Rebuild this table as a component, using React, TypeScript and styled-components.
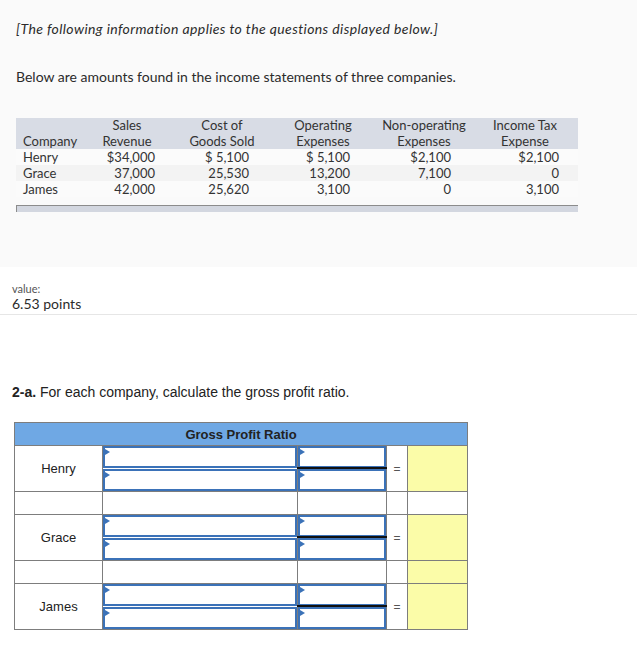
import React from "react";
import styled, { createGlobalStyle } from "styled-components";

const GlobalStyle = createGlobalStyle`
  html, body { margin: 0; padding: 0; background: #ffffff; }
  body { font-family: "Lato", "Open Sans", sans-serif; color: #333; }
`;

const Intro = styled.section`
  background: #fafafa;
  height: 267px;
  box-sizing: border-box;
  padding: 20px 0 0 16px;
`;

const Note = styled.p`
  margin: 0;
  font-style: italic;
  font-size: 14px;
  line-height: 18px;
  letter-spacing: 0.39px;
  color: #2b2b2b;
`;

const Lead = styled.p`
  margin: 30px 0 0 0;
  font-size: 14px;
  line-height: 18px;
  color: #2b2b2b;
`;

const DataGrid = styled.div`
  margin-top: 32px;
  width: 562px;
  display: grid;
  grid-template-columns: 72px 78px 112px 90px 112px 90px 8px;
  font-size: 13px;
  line-height: 16px;
  color: #333;
`;

const HeadCell = styled.div<{ $left?: boolean }>`
  background: #d8dce5;
  display: flex;
  flex-direction: column;
  justify-content: flex-end;
  text-align: ${(p) => (p.$left ? "left" : "center")};
  padding: ${(p) => (p.$left ? "0 0 0 7px" : "0")};
  height: 31px;
`;

const Cell = styled.div<{ $pr?: number; $left?: boolean; $shade?: boolean }>`
  background: ${(p) => (p.$shade ? "#f3f3f3" : "#fbfbfb")};
  text-align: ${(p) => (p.$left ? "left" : "right")};
  padding: ${(p) => (p.$left ? "0 0 0 7px" : `0 ${p.$pr ?? 0}px 0 0`)};
  height: 16px;
`;

const BottomBar = styled.div`
  margin-top: 8px;
  width: 561px;
  height: 6px;
  background: #d3d7e0;
  border-top: 1px solid #8c8c8c;
  border-left: 1px solid #8c8c8c;
`;

const ValueBlock = styled.section`
  box-sizing: border-box;
  padding: 15px 0 0 12px;
  height: 48px;
  border-bottom: 1px solid #e6e6e6;
`;

const ValueLabel = styled.div`
  font-size: 11px;
  line-height: 13px;
  color: #555;
`;

const ValuePoints = styled.div`
  font-size: 14px;
  line-height: 17px;
  color: #2b2b2b;
`;

const Question = styled.p`
  margin: 69px 0 0 12px;
  font-family: "Liberation Sans", Arial, sans-serif;
  font-size: 14px;
  line-height: 17px;
  color: #222;
  b { font-weight: bold; }
`;

const AnswerTable = styled.table`
  margin: 21px 0 0 14px;
  border-collapse: collapse;
  font-family: "Liberation Sans", Arial, sans-serif;
  font-size: 13px;
  color: #222;
  td, th { border: 1px solid #7d7d7d; padding: 0; }
`;

const HeaderTh = styled.th`
  background: #6fa8e4;
  height: 22px;
  font-weight: bold;
  font-size: 13px;
  text-align: center;
  color: #222;
`;

const LabelCell = styled.td`
  width: 87px;
  text-align: center;
  height: 45px;
`;

const InputCell = styled.td<{ $w: number }>`
  width: ${(p) => p.$w}px;
  vertical-align: top;
`;

const Stack = styled.div`
  display: flex;
  flex-direction: column;
  gap: 1px;
  position: relative;
`;

const Field = styled.div`
  position: relative;
  height: 18px;
  border: 2px solid #3b72b8;
  background: #fff;
  &::before {
    content: "";
    position: absolute;
    left: 0;
    top: 1px;
    width: 0;
    height: 0;
    border-top: 3.5px solid transparent;
    border-bottom: 3.5px solid transparent;
    border-left: 5px solid #3b72b8;
  }
`;

const FractionBar = styled.div`
  position: absolute;
  left: -1px;
  right: -1px;
  top: 21px;
  height: 2px;
  background: #111;
  z-index: 1;
`;

const EqCell = styled.td`
  width: 20px;
  text-align: center;
  color: #555;
  font-size: 12px;
`;

const AnswerCell = styled.td<{ $fill: boolean }>`
  width: 59px;
  background: ${(p) => (p.$fill ? "#fbfca8" : "#fff")};
`;

const SpacerRow = styled.tr`
  height: 23px;
`;

const companies = [
  { name: "Henry", sales: "$34,000", cogs: "$ 5,100", op: "$ 5,100", nonop: "$2,100", tax: "$2,100" },
  { name: "Grace", sales: "37,000", cogs: "25,530", op: "13,200", nonop: "7,100", tax: "0" },
  { name: "James", sales: "42,000", cogs: "25,620", op: "3,100", nonop: "0", tax: "3,100" },
];

const headers: [string, string][] = [
  ["Sales", "Revenue"],
  ["Cost of", "Goods Sold"],
  ["Operating", "Expenses"],
  ["Non-operating", "Expenses"],
  ["Income Tax", "Expense"],
];

const pads = [11, 29, 18, 29, 11];

function InputPair({ bar }: { bar?: boolean }) {
  return (
    <Stack>
      <Field />
      <Field />
      {bar && <FractionBar />}
    </Stack>
  );
}

export default function App() {
  return (
    <>
      <GlobalStyle />
      <Intro>
        <Note>[The following information applies to the questions displayed below.]</Note>
        <Lead>Below are amounts found in the income statements of three companies.</Lead>
        <DataGrid>
          <HeadCell $left>
            <span>Company</span>
          </HeadCell>
          {headers.map(([a, b]) => (
            <HeadCell key={a}>
              <span>{a}</span>
              <span>{b}</span>
            </HeadCell>
          ))}
          <HeadCell />
          {companies.map((c, i) => {
            const shade = i === 1;
            const vals = [c.sales, c.cogs, c.op, c.nonop, c.tax];
            return (
              <React.Fragment key={c.name}>
                <Cell $left $shade={shade}>{c.name}</Cell>
                {vals.map((v, j) => (
                  <Cell key={j} $pr={pads[j]} $shade={shade}>
                    {v}
                  </Cell>
                ))}
                <Cell $shade={shade} />
              </React.Fragment>
            );
          })}
        </DataGrid>
        <BottomBar />
      </Intro>
      <ValueBlock>
        <ValueLabel>value:</ValueLabel>
        <ValuePoints>6.53 points</ValuePoints>
      </ValueBlock>
      <Question>
        <b>2-a.</b> For each company, calculate the gross profit ratio.
      </Question>
      <AnswerTable>
        <tbody>
          <tr>
            <HeaderTh colSpan={5}>Gross Profit Ratio</HeaderTh>
          </tr>
          {companies.map((c, i) => (
            <React.Fragment key={c.name}>
              <tr>
                <LabelCell>{c.name}</LabelCell>
                <InputCell $w={194}>
                  <InputPair />
                </InputCell>
                <InputCell $w={88}>
                  <InputPair bar />
                </InputCell>
                <EqCell>=</EqCell>
                <AnswerCell $fill />
              </tr>
              {i < companies.length - 1 && (
                <SpacerRow>
                  <td />
                  <td />
                  <td />
                  <td />
                  <AnswerCell $fill={i === 1} />
                </SpacerRow>
              )}
            </React.Fragment>
          ))}
        </tbody>
      </AnswerTable>
    </>
  );
}
